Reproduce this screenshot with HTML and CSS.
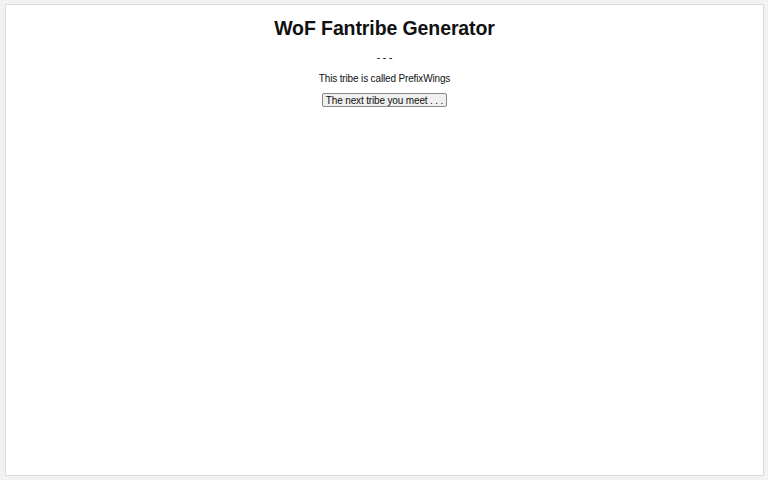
FILE: index.html
```html
<!DOCTYPE html>
<html>
<head>
	<meta charset="UTF-8">
	<title>WoF Fantribe Generator</title>
	<link rel="stylesheet" href="styles.css">
</head>
<body>
	<section class="wrap">
		<h1>WoF Fantribe Generator</h1>
		<p class="sep">- - -</p>
		<p class="tribe">This tribe is called <span id="name">PrefixWings</span></p>
		<input class="next" type="button" value="The next tribe you meet . . ." />
	</section>
</body>
</html>
```

FILE: styles.css
```css
html, body {
	height: 100%;
}
body {
	margin: 0;
	padding: 4px 4px 4px 5px;
	box-sizing: border-box;
	background: #f2f2f2;
	font-family: "Liberation Sans", Arial, sans-serif;
}
p {
	margin: 0;
}
.wrap {
	height: 100%;
	box-sizing: border-box;
	background: #fff;
	border: 1px solid #dcdcdc;
	text-align: center;
	padding-top: 12px;
}
h1 {
	margin: 0;
	font-size: 19.5px;
	line-height: 22px;
	font-weight: bold;
	color: #111;
	letter-spacing: -0.1px;
}
.sep {
	margin-top: 13px;
	font-size: 10px;
	line-height: 12px;
}
.tribe {
	margin-top: 9px;
	font-size: 10px;
	line-height: 12px;
	color: #111;
	letter-spacing: -0.15px;
}
.next {
	margin-top: 8px;
	font: 10px "Liberation Sans", Arial, sans-serif;
	letter-spacing: -0.15px;
	padding: 0 3px;
	height: 14px;
	border: 1px solid #888;
	border-radius: 2px;
	background: #efefef;
	color: #111;
}
```
